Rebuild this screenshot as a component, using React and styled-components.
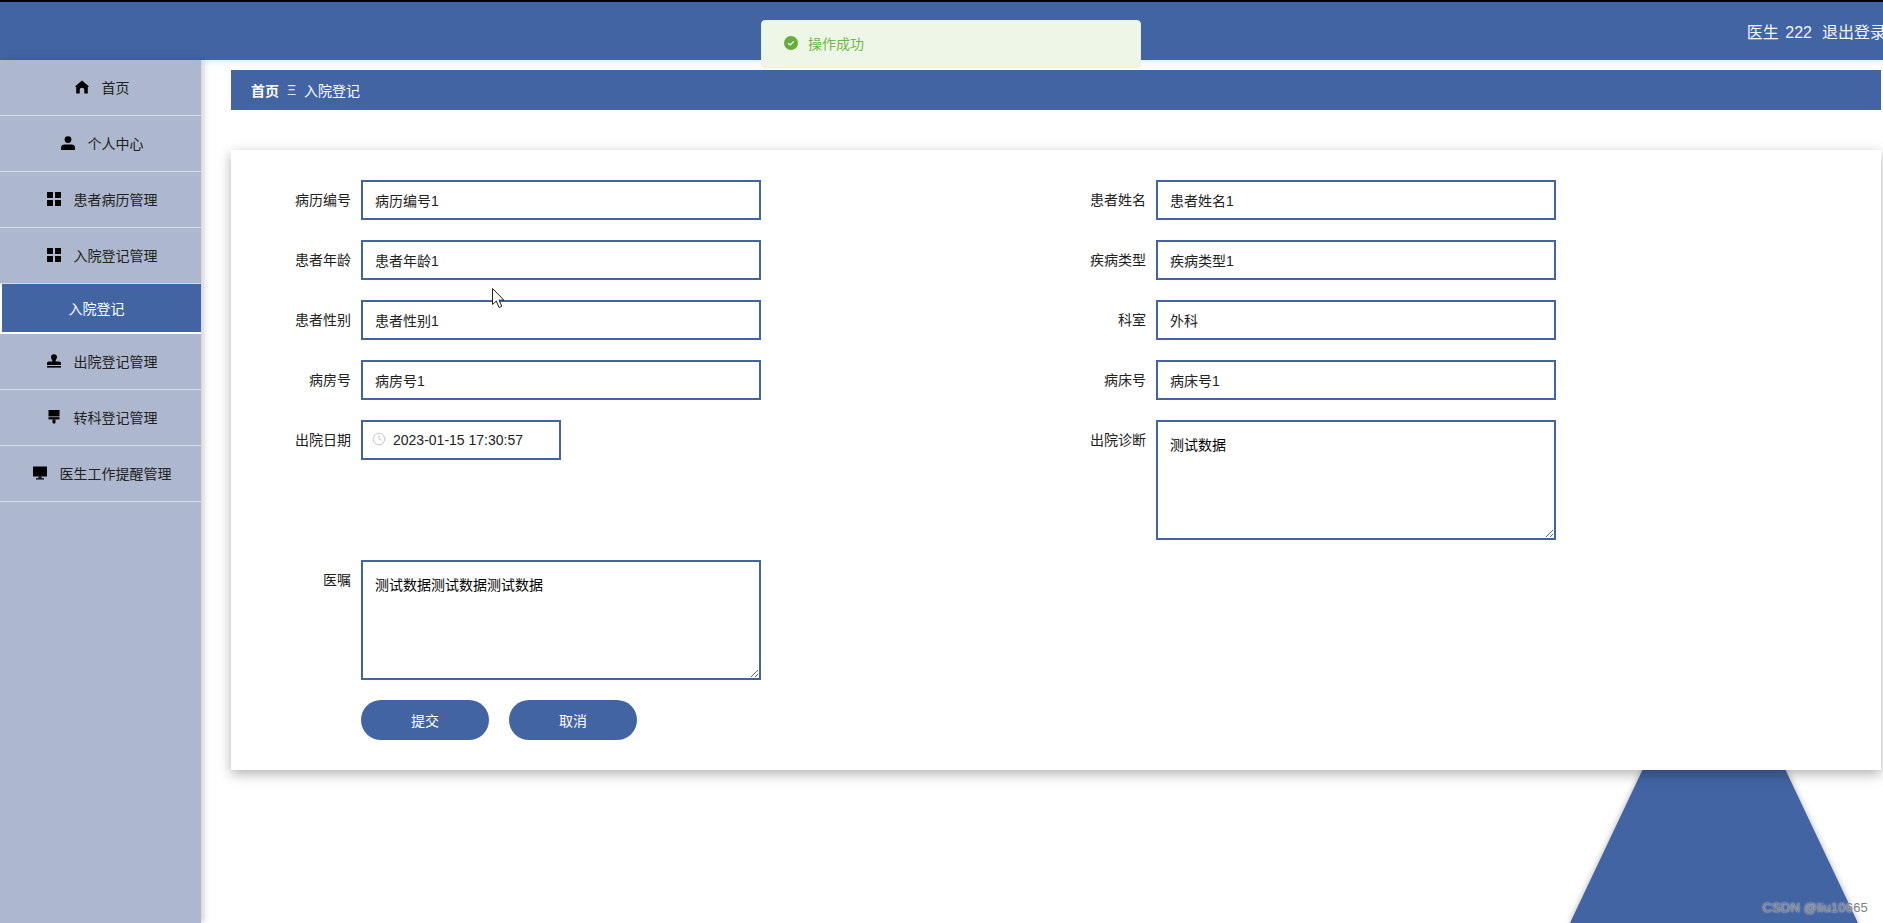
import React from "react";
import styled, { createGlobalStyle } from "styled-components";
import { Clock } from "lucide-react";

const BLUE = "#4264a3";

const GlobalStyle = createGlobalStyle`
  html, body {
    margin: 0;
    padding: 0;
    background: #fff;
  }
  * {
    box-sizing: border-box;
  }
  body {
    font-family: "Liberation Sans", "Noto Sans CJK SC", sans-serif;
    font-size: 14px;
    color: #222;
  }
`;

const HomeIcon = () => (
  <svg width="14" height="14" viewBox="0 0 14 14" fill="currentColor">
    <path d="M7 0.4 L14 6.4 L12.8 7 V13.6 H9.3 V10 A2.3 2.3 0 0 0 4.7 10 V13.6 H1.2 V7 L0 6.4 Z" />
  </svg>
);

const UserIcon = () => (
  <svg width="14" height="14" viewBox="0 0 14 14" fill="currentColor">
    <circle cx="7" cy="3.6" r="3.4" />
    <path d="M0 14 V11.6 C0 9.6 1.8 8.4 3.6 8.4 H10.4 C12.2 8.4 14 9.6 14 11.6 V14 Z" />
  </svg>
);

const GridIcon = () => (
  <svg width="14" height="14" viewBox="0 0 14 14" fill="currentColor">
    <rect x="0" y="0" width="6" height="6" />
    <rect x="8" y="0" width="6" height="6" />
    <rect x="0" y="8" width="6" height="6" />
    <rect x="8" y="8" width="6" height="6" />
  </svg>
);

const StampIcon = () => (
  <svg width="14" height="14" viewBox="0 0 14 14" fill="currentColor">
    <path d="M7 0.3 C8.8 0.3 10 1.5 10 3.2 C10 4.8 8.6 5.6 8.6 7.5 H12.2 C13.2 7.5 14 8.3 14 9.3 V11 H0 V9.3 C0 8.3 0.8 7.5 1.8 7.5 H5.4 C5.4 5.6 4 4.8 4 3.2 C4 1.5 5.2 0.3 7 0.3 Z" />
    <rect x="0" y="12" width="14" height="1.6" />
  </svg>
);

const BrushIcon = () => (
  <svg width="14" height="14" viewBox="0 0 14 14" fill="currentColor">
    <rect x="1.5" y="0" width="11" height="6.4" />
    <rect x="1.5" y="7.2" width="11" height="2.2" />
    <path d="M5.5 9.4 H8.5 V12.6 L7 14 L5.5 12.6 Z" />
  </svg>
);

const MonitorIcon = () => (
  <svg width="14" height="14" viewBox="0 0 14 14" fill="currentColor">
    <rect x="0" y="0.5" width="14" height="10" />
    <rect x="5.5" y="10.5" width="3" height="1.6" />
    <rect x="3" y="12.2" width="8" height="1.3" />
  </svg>
);

const SuccessIcon = () => (
  <svg width="14" height="14" viewBox="0 0 14 14">
    <circle cx="7" cy="7" r="7" fill="#67ad3a" />
    <path d="M4.2 7.2 L6.2 9 L9.8 5.4" fill="none" stroke="#fff" strokeWidth="1.2" />
  </svg>
);

const menu = [
  { name: "首页", icon: <HomeIcon /> },
  { name: "个人中心", icon: <UserIcon /> },
  { name: "患者病历管理", icon: <GridIcon /> },
  { name: "入院登记管理", icon: <GridIcon />, sub: "入院登记" },
  { name: "出院登记管理", icon: <StampIcon /> },
  { name: "转科登记管理", icon: <BrushIcon /> },
  { name: "医生工作提醒管理", icon: <MonitorIcon /> },
];

const leftFields = [
  ["病历编号", "病历编号1"],
  ["患者年龄", "患者年龄1"],
  ["患者性别", "患者性别1"],
  ["病房号", "病房号1"],
];

const rightFields = [
  ["患者姓名", "患者姓名1"],
  ["疾病类型", "疾病类型1"],
  ["科室", "外科"],
  ["病床号", "病床号1"],
];

const App = () => {
  return (
    <Page>
      <GlobalStyle />
      <Header>
        <UserName>医生 222</UserName>
        <Logout>退出登录</Logout>
      </Header>
      <Body>
        <Sidebar>
          {menu.map((item) => (
            <React.Fragment key={item.name}>
              <MenuItem>
                <MenuIcon>{item.icon}</MenuIcon>
                {item.name}
              </MenuItem>
              {item.sub && <SubItem>{item.sub}</SubItem>}
            </React.Fragment>
          ))}
        </Sidebar>
        <Main>
          <Breadcrumb>
            <strong>首页</strong>
            <Separator>Ξ</Separator>
            <span>入院登记</span>
          </Breadcrumb>
          <Card>
            <FormGrid>
              {leftFields.map((field, index) => (
                <React.Fragment key={field[0]}>
                  <Field>
                    <Label>{field[0]}</Label>
                    <TextInput defaultValue={field[1]} />
                  </Field>
                  <Field>
                    <Label>{rightFields[index][0]}</Label>
                    <TextInput defaultValue={rightFields[index][1]} />
                  </Field>
                </React.Fragment>
              ))}
              <Field>
                <Label>出院日期</Label>
                <DateBox>
                  <DateIcon>
                    <Clock size={14} strokeWidth={1.6} />
                  </DateIcon>
                  <DateInput defaultValue="2023-01-15 17:30:57" />
                </DateBox>
              </Field>
              <Field>
                <Label>出院诊断</Label>
                <TextArea defaultValue="测试数据" />
              </Field>
              <Field>
                <Label>医嘱</Label>
                <TextArea defaultValue="测试数据测试数据测试数据" />
              </Field>
            </FormGrid>
            <Actions>
              <ActionButton>提交</ActionButton>
              <ActionButton>取消</ActionButton>
            </Actions>
          </Card>
        </Main>
      </Body>
      <TriangleShadow>
        <Triangle />
      </TriangleShadow>
      <Toast>
        <SuccessIcon />
        <ToastText>操作成功</ToastText>
      </Toast>
      <Pointer width="13" height="21" viewBox="0 0 13 21">
        <path
          d="M0.5 0.5 V16.5 L4.3 13 L7 19.5 L9.8 18.3 L7.1 12.2 H12 Z"
          fill="#fff"
          stroke="#222"
          strokeWidth="1"
        />
      </Pointer>
      <Watermark>CSDN @liu10665</Watermark>
    </Page>
  );
};

export default App;

const Page = styled.div`
  position: relative;
  display: flex;
  flex-direction: column;
  height: 100vh;
  overflow: hidden;
`;

const Header = styled.header`
  position: relative;
  z-index: 1;
  display: flex;
  flex: none;
  align-items: center;
  justify-content: flex-end;
  gap: 10px;
  height: 60px;
  margin-right: -3px;
  border-top: 2px solid #000;
  background: ${BLUE};
  box-shadow: 0 2px 6px #d6effa;
  color: #f2f5fa;
  font-size: 16px;
  word-spacing: 2px;
  white-space: nowrap;
`;

const UserName = styled.span``;

const Logout = styled.span``;

const Body = styled.div`
  display: flex;
  flex: 1;
  min-height: 0;
`;

const Sidebar = styled.nav`
  position: relative;
  z-index: 2;
  flex: none;
  width: 201px;
  background: #adb7cd;
  box-shadow: 3px 0 6px rgba(0, 0, 0, 0.18);
`;

const MenuItem = styled.div`
  display: flex;
  align-items: center;
  justify-content: center;
  height: 56px;
  padding-left: 3px;
  padding-bottom: 2px;
  border-bottom: 1px solid #d5dae6;
  color: #222;
`;

const MenuIcon = styled.span`
  display: flex;
  margin-right: 13px;
  color: #000;
`;

const SubItem = styled.div`
  display: flex;
  align-items: center;
  justify-content: center;
  height: 50px;
  padding-right: 10px;
  border-left: 2px solid #fff;
  border-bottom: 2px solid #fff;
  background: ${BLUE};
  color: #fff;
`;

const Main = styled.main`
  position: relative;
  z-index: 1;
  flex: 1;
  min-width: 0;
  padding: 10px 2px 0 30px;
`;

const Breadcrumb = styled.div`
  display: flex;
  align-items: center;
  height: 40px;
  margin-bottom: 40px;
  padding-left: 20px;
  background: ${BLUE};
  color: #fff;

  strong {
    font-weight: 700;
  }
`;

const Separator = styled.span`
  margin: 0 8px;
  color: rgba(255, 255, 255, 0.85);
  font-weight: 400;
`;

const Card = styled.section`
  padding: 30px;
  background: #fff;
  box-shadow: 0 4px 12px rgba(0, 0, 0, 0.3);
`;

const FormGrid = styled.div`
  display: grid;
  grid-template-columns: 795px 795px;
  row-gap: 20px;
`;

const Field = styled.div`
  display: flex;
  align-items: flex-start;
`;

const Label = styled.label`
  flex: none;
  width: 90px;
  margin-right: 10px;
  line-height: 40px;
  text-align: right;
  color: #222;
`;

const TextInput = styled.input`
  width: 400px;
  height: 40px;
  padding: 0 12px;
  border: 2px solid ${BLUE};
  outline: none;
  background: #fff;
  color: #222;
  font: inherit;
`;

const DateBox = styled.div`
  position: relative;
  width: 200px;
`;

const DateIcon = styled.span`
  position: absolute;
  top: 12px;
  left: 11px;
  display: flex;
  color: #c0c4cc;
`;

const DateInput = styled(TextInput)`
  width: 200px;
  padding-left: 30px;
`;

const TextArea = styled.textarea`
  display: block;
  width: 400px;
  height: 120px;
  padding: 13px 12px 10px;
  border: 2px solid ${BLUE};
  outline: none;
  background: #fff;
  color: #000;
  font: inherit;
  line-height: 1.5;
`;

const Actions = styled.div`
  display: flex;
  gap: 20px;
  margin-top: 20px;
  padding-left: 100px;
`;

const ActionButton = styled.button`
  width: 128px;
  height: 40px;
  padding: 0;
  border: 0;
  border-radius: 20px;
  background: ${BLUE};
  color: #fff;
  font: inherit;
  cursor: pointer;
`;

const TriangleShadow = styled.div`
  position: absolute;
  top: 619px;
  left: 1570px;
  filter: drop-shadow(0 0 3px rgba(0, 0, 0, 0.3));
`;

const Triangle = styled.div`
  width: 288px;
  height: 304px;
  background: ${BLUE};
  clip-path: polygon(50% 0, 100% 100%, 0 100%);
`;

const Toast = styled.div`
  position: absolute;
  top: 20px;
  left: 761px;
  z-index: 5;
  display: flex;
  align-items: center;
  width: 380px;
  height: 48px;
  padding-left: 22px;
  padding-bottom: 2px;
  border: 1px solid #e1f3d8;
  border-radius: 4px;
  background: #eef6e8;
`;

const ToastText = styled.span`
  margin-left: 10px;
  color: #72b54a;
`;

const Pointer = styled.svg`
  position: absolute;
  top: 288px;
  left: 492px;
  z-index: 6;
`;

const Watermark = styled.div`
  position: absolute;
  right: 15px;
  bottom: 8px;
  z-index: 6;
  color: #808080;
  font-size: 13px;
  letter-spacing: 0.2px;
  text-shadow: 0 0 2px #fff;
`;
